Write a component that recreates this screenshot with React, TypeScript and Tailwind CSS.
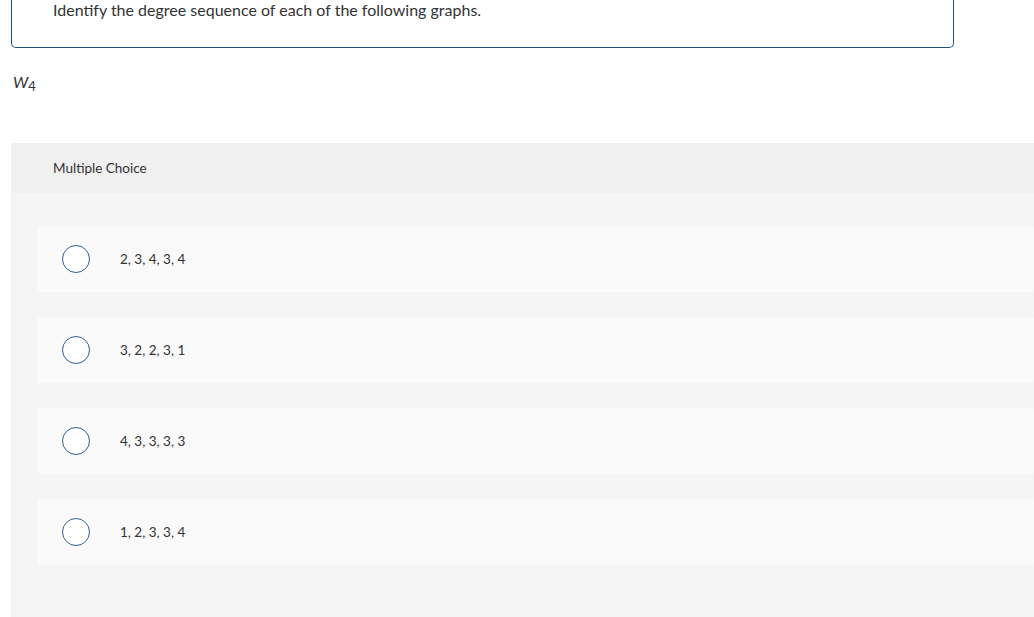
const options = ["2, 3, 4, 3, 4", "3, 2, 2, 3, 1", "4, 3, 3, 3, 3", "1, 2, 3, 3, 4"];

export default function App() {
  return (
    <div className="h-[617px] w-[1034px] overflow-hidden bg-white text-[#333] [font-family:Lato,'Open_Sans',sans-serif]">
      {/* question prompt box, top edge scrolled out of view */}
      <div className="ml-[11px] h-[48px] w-[943px] rounded-b-[5px] border-x border-b border-[#1f4f85]">
        <p className="pl-[41px] text-[16px] leading-[19px] text-[#333]">
          Identify the degree sequence of each of the following graphs.
        </p>
      </div>

      <div className="ml-[13px] mt-[24px] h-[71px] text-[16px] italic leading-[20px] text-[#333]">
        W<sub className="text-[13px] not-italic">4</sub>
      </div>

      <div className="ml-[11px] bg-[#f5f5f5] pb-[52px]">
        <div className="flex h-[50px] items-center bg-[#f0f0f0] pl-[42px] pt-[1px] text-[13.5px] text-[#333]">
          Multiple Choice
        </div>
        <div className="flex flex-col gap-[25px] pl-[26px] pt-[33px]">
          {options.map((o) => (
            <label
              key={o}
              className="flex h-[66px] items-center rounded-[3px] bg-[#fafafa] pl-[25px]"
            >
              <span className="h-[28px] w-[28px] shrink-0 rounded-full border-[1.5px] border-[#2d5f93] bg-white" />
              <span className="ml-[30px] pt-[1px] text-[13.5px] text-[#333]">{o}</span>
            </label>
          ))}
        </div>
      </div>
    </div>
  );
}
